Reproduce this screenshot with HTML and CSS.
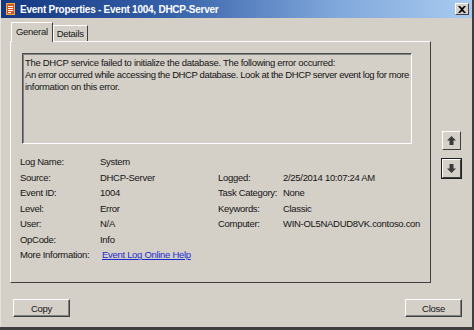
FILE: index.html
```html
<!DOCTYPE html>
<html>
<head>
<meta charset="utf-8">
<link rel="stylesheet" href="styles.css">
</head>
<body>
<div class="window">
  <div class="titlebar">
    <svg class="appicon" width="9" height="12" viewBox="0 0 9 12">
      <rect x="0" y="0" width="9" height="12" fill="#e8b040"/>
      <rect x="1" y="1" width="7" height="10" fill="#d2542a"/>
      <rect x="2" y="3" width="5" height="1" fill="#fff"/>
      <rect x="2" y="5" width="5" height="1" fill="#fff"/>
      <rect x="2" y="7" width="5" height="1" fill="#fff"/>
      <rect x="2" y="9" width="3" height="1" fill="#fff"/>
    </svg>
    <span class="title">Event Properties - Event 1004, DHCP-Server</span>
    <span class="close">
      <svg width="8" height="7" viewBox="0 0 8 7"><path d="M0 0h2l2 2 2-2h2L5 3.5 8 7H6L4 5 2 7H0l3-3.5z" fill="#000"/></svg>
    </span>
  </div>
  <div class="content">
    <div class="tabs">
      <div class="tab active">General</div>
      <div class="tab">Details</div>
    </div>
    <div class="main">
      <div class="panel">
        <div class="desc">
          <div>The DHCP service failed to initialize the database. The following error occurred:</div>
          <div class="tight">An error occurred while accessing the DHCP database. Look at the DHCP server event log for more</div>
          <div>information on this error.</div>
        </div>
        <div class="fields">
          <span class="lbl">Log Name:</span><span class="val">System</span><span></span><span></span>
          <span class="lbl">Source:</span><span class="val">DHCP-Server</span><span class="lbl">Logged:</span><span class="val">2/25/2014 10:07:24 AM</span>
          <span class="lbl">Event ID:</span><span class="val">1004</span><span class="lbl">Task Category:</span><span class="val">None</span>
          <span class="lbl">Level:</span><span class="val">Error</span><span class="lbl">Keywords:</span><span class="val">Classic</span>
          <span class="lbl">User:</span><span class="val">N/A</span><span class="lbl">Computer:</span><span class="val">WIN-OL5NADUD8VK.contoso.con</span>
          <span class="lbl">OpCode:</span><span class="val">Info</span><span></span><span></span>
          <span class="lbl">More Information:</span><span class="val"><a class="link" href="#">Event Log Online Help</a></span><span></span><span></span>
        </div>
      </div>
      <div class="side">
        <div class="arrowbtn">
          <svg width="9" height="9" viewBox="0 0 9 9"><path d="M4.5 0L9 4.5H6.5V9h-4V4.5H0z" fill="#3c3c3c"/></svg>
        </div>
        <div class="arrowbtn focused">
          <svg width="9" height="9" viewBox="0 0 9 9"><path d="M4.5 9L9 4.5H6.5V0h-4v4.5H0z" fill="#3c3c3c"/></svg>
        </div>
      </div>
    </div>
    <div class="buttons">
      <div class="btn">Copy</div>
      <div class="btn">Close</div>
    </div>
  </div>
</div>
</body>
</html>
```
FILE: styles.css
```css
* { box-sizing: border-box; }
html, body { margin: 0; padding: 0; }
body {
  width: 474px;
  height: 330px;
  overflow: hidden;
  background: #3e3e3e;
  font-family: "Liberation Sans", Arial, sans-serif;
  font-size: 9.5px;
  letter-spacing: -0.3px;
  color: #141414;
}
.window {
  width: 472px;
  height: 327px;
  background: #d4d0c8;
  border-left: 1px solid #e4e2dc;
  display: flex;
  flex-direction: column;
}
.titlebar {
  height: 18px;
  flex: none;
  display: flex;
  align-items: center;
  padding: 0 3px 0 5px;
  gap: 5px;
  background: linear-gradient(to right, #143782 0%, #3560a8 35%, #7ea6da 70%, #a9cbf0 100%);
}
.appicon { flex: none; }
.title {
  flex: 1;
  color: #fff;
  font-weight: bold;
  font-size: 10px;
  letter-spacing: -0.25px;
  white-space: nowrap;
}
.close {
  width: 14px;
  height: 12px;
  background: #d4d0c8;
  border: 1px solid;
  border-color: #fff #404040 #404040 #fff;
  display: flex;
  align-items: center;
  justify-content: center;
}
.content {
  flex: 1;
  display: flex;
  flex-direction: column;
  padding: 4px 0 0 9px;
}
.tabs {
  display: flex;
  align-items: flex-end;
  height: 19px;
  padding-left: 1px;
  position: relative;
  z-index: 1;
}
.tab {
  height: 16px;
  padding: 0 3px;
  border: 1px solid;
  border-bottom: none;
  border-color: #fff #404040 transparent #fff;
  display: flex;
  align-items: center;
  background: #d4d0c8;
}
.tab.active {
  height: 20px;
  margin-bottom: -1px;
  padding: 0 4px 2px;
}
.main {
  display: flex;
  align-items: flex-start;
}
.panel {
  width: 421px;
  height: 242px;
  border: 1px solid;
  border-color: #fff #404040 #404040 #fff;
  padding: 11px 0 0 11px;
}
.desc {
  width: 390px;
  height: 91px;
  border: 1px solid;
  border-color: #505050 #fff #fff #505050;
  box-shadow: inset 1px 1px 0 #808080;
  padding: 3px 1px 3px 2px;
  line-height: 12px;
  white-space: nowrap;
}
.desc .tight {
  letter-spacing: -0.38px;
}
.fields {
  margin-top: 10px;
  margin-left: -2px;
  display: grid;
  grid-template-columns: 80px 118px 65px auto;
  grid-auto-rows: 15.5px;
  align-items: center;
  white-space: nowrap;
}
.link {
  color: #1c2ccc;
  text-decoration: underline;
  padding-left: 2px;
}
.side {
  margin-left: 11px;
  padding-top: 90px;
  display: flex;
  flex-direction: column;
  gap: 9px;
}
.arrowbtn {
  width: 19px;
  height: 19px;
  border: 1px solid;
  border-color: #fff #404040 #404040 #fff;
  display: flex;
  align-items: center;
  justify-content: center;
}
.arrowbtn.focused {
  outline: 1px solid #202020;
}
.buttons {
  display: flex;
  justify-content: space-between;
  margin-top: 16px;
  padding: 0 10px 0 3px;
}
.btn {
  width: 57px;
  height: 18px;
  border: 1px solid;
  border-color: #fff #404040 #404040 #fff;
  box-shadow: inset -1px -1px 0 #808080;
  display: flex;
  align-items: center;
  justify-content: center;
}
```
